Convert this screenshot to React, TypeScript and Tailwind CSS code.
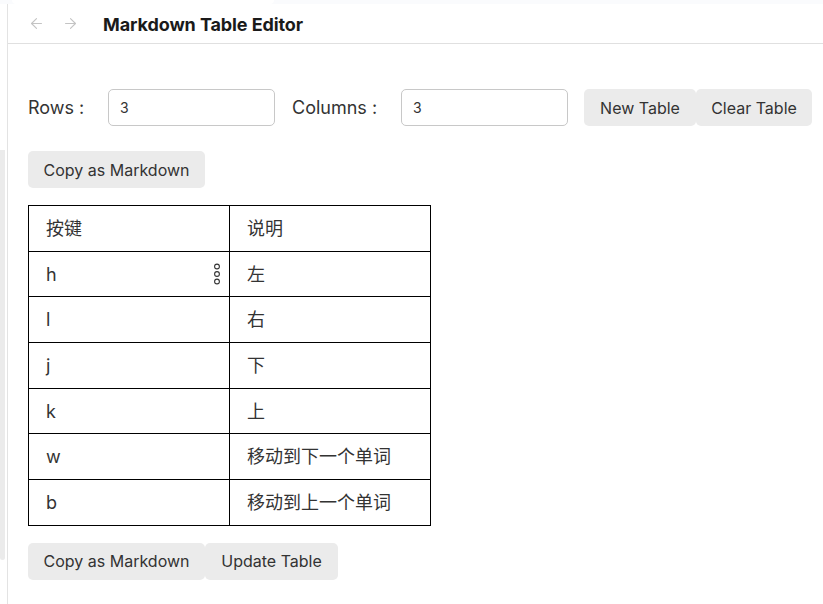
import { ArrowLeft, ArrowRight } from "lucide-react";

const rows = [
  ["按键", "说明"],
  ["h", "左"],
  ["l", "右"],
  ["j", "下"],
  ["k", "上"],
  ["w", "移动到下一个单词"],
  ["b", "移动到上一个单词"],
];

function Kebab() {
  return (
    <svg width="8" height="22" viewBox="0 0 8 22" className="text-[#333]">
      <circle cx="4" cy="3.5" r="2.4" fill="none" stroke="currentColor" strokeWidth="1.1" />
      <circle cx="4" cy="11" r="2.4" fill="none" stroke="currentColor" strokeWidth="1.1" />
      <circle cx="4" cy="18.5" r="2.4" fill="none" stroke="currentColor" strokeWidth="1.1" />
    </svg>
  );
}

export default function App() {
  const btn =
    "h-[37px] rounded-[5px] bg-[#ebebeb] text-[16px] text-[#333] hover:bg-[#e0e0e0]";

  return (
    <div
      className="w-[823px] h-[604px] bg-white overflow-hidden flex flex-col"
      style={{ fontFamily: "Inter, 'Noto Sans CJK SC', sans-serif" }}
    >
      {/* tab strip */}
      <div className="h-[4px] flex bg-[#fafbfd] shrink-0">
        <div className="ml-[12px] w-[262px] bg-white rounded-b-[6px]" />
      </div>

      <div className="flex flex-1">
        {/* left edge */}
        <div className="w-[8px] shrink-0 border-r border-[#e3e3e3] flex flex-col">
          <div className="mt-[146px] h-[410px] w-[5px] bg-[#ebebeb] rounded-b-[3px]" />
        </div>

        <div className="flex-1 flex flex-col">
          {/* Header */}
          <div className="h-[40px] border-b border-[#e0e0e0] flex items-center shrink-0">
            <ArrowLeft className="ml-[20px] w-[17px] h-[17px] text-[#c4c4c4]" strokeWidth={1.6} />
            <ArrowRight className="ml-[17px] w-[17px] h-[17px] text-[#c4c4c4]" strokeWidth={1.6} />
            <h1 className="ml-[24px] mt-[1px] text-[18px] font-bold text-[#1a1a1a] tracking-[-0.1px]">
              Markdown Table Editor
            </h1>
          </div>

          {/* Content */}
          <div className="pl-[20px] pt-[45px] flex flex-col">
            <div className="flex items-center">
              <label className="text-[18px] text-[#333] w-[80px]">Rows :</label>
              <input
                defaultValue="3"
                className="w-[167px] h-[37px] rounded-[5px] border border-[#c8c8c8] px-[11px] text-[14px] text-[#333] outline-none"
              />
              <label className="ml-[17px] text-[18px] text-[#333] w-[109px]">Columns :</label>
              <input
                defaultValue="3"
                className="w-[167px] h-[37px] rounded-[5px] border border-[#c8c8c8] px-[11px] text-[14px] text-[#333] outline-none"
              />
              <button className={`${btn} ml-[16px] w-[112px]`}>New Table</button>
              <button className={`${btn} w-[116px]`}>Clear Table</button>
            </div>

            <div className="mt-[25px]">
              <button className={`${btn} w-[177px]`}>Copy as Markdown</button>
            </div>

            <table className="mt-[17px] w-[403px] border-collapse text-[18px] text-[#333]">
              <tbody>
                {rows.map((r, i) => (
                  <tr key={i} className="h-[45.7px]">
                    <td className="w-[201px] border border-black pl-[17px] pr-[8px]">
                      <div className="flex items-center justify-between">
                        <span>{r[0]}</span>
                        {i === 1 && <Kebab />}
                      </div>
                    </td>
                    <td className="border border-black pl-[17px]">{r[1]}</td>
                  </tr>
                ))}
              </tbody>
            </table>

            <div className="mt-[17px] flex">
              <button className={`${btn} w-[177px]`}>Copy as Markdown</button>
              <button className={`${btn} w-[133px]`}>Update Table</button>
            </div>
          </div>
        </div>
      </div>
    </div>
  );
}
